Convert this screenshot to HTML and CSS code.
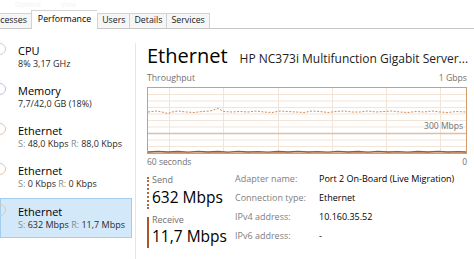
FILE: index.html
```html
<!DOCTYPE html>
<html lang="en">
<head>
    <meta charset="UTF-8">
    <meta name="viewport" content="width=device-width, initial-scale=1.0">
    <title>Task Manager - Performance</title>
    <link rel="stylesheet" href="styles.css">
</head>
<body>

<div class="menu"><span>Options</span><span>View</span></div>

<div class="tabs">
    <div class="tab tab-cut">Processes</div>
    <div class="tab active">Performance</div>
    <div class="tab">Users</div>
    <div class="tab">Details</div>
    <div class="tab last">Services</div>
</div>

<div class="main">
    <div class="sidebar">
        <div class="item">
            <span class="thumb cpu"></span>
            <div>
                <div class="item-title">CPU</div>
                <div class="item-sub">8% 3,17 GHz</div>
            </div>
        </div>
        <div class="item">
            <span class="thumb mem"></span>
            <div>
                <div class="item-title">Memory</div>
                <div class="item-sub">7,7/42,0 GB (18%)</div>
            </div>
        </div>
        <div class="item">
            <span class="thumb net"></span>
            <div>
                <div class="item-title">Ethernet</div>
                <div class="item-sub"><span class="k">S:</span> 48,0 Kbps <span class="k">R:</span> 88,0 Kbps</div>
            </div>
        </div>
        <div class="item">
            <span class="thumb net"></span>
            <div>
                <div class="item-title">Ethernet</div>
                <div class="item-sub"><span class="k">S:</span> 0 Kbps <span class="k">R:</span> 0 Kbps</div>
            </div>
        </div>
        <div class="item selected">
            <span class="thumb net"></span>
            <div>
                <div class="item-title">Ethernet</div>
                <div class="item-sub"><span class="k">S:</span> 632 Mbps <span class="k">R:</span> 11,7 Mbps</div>
            </div>
        </div>
    </div>

    <div class="divider"></div>

    <div class="detail">
        <div class="head">
            <span class="head-title">Ethernet</span>
            <span class="head-sub">HP NC373i Multifunction Gigabit Server...</span>
        </div>

        <div class="axis top-axis"><span>Throughput</span><span>1 Gbps</span></div>

        <div class="graph">
            <svg width="318" height="65" viewBox="0 0 318 65">
                <!-- grid -->
                <g stroke="#f3e4d8" stroke-width="1">
                    <line x1="0" y1="6.5" x2="318" y2="6.5"/>
                    <line x1="0" y1="13" x2="318" y2="13"/>
                    <line x1="0" y1="19.5" x2="318" y2="19.5"/>
                    <line x1="0" y1="26" x2="318" y2="26"/>
                    <line x1="0" y1="32.5" x2="318" y2="32.5"/>
                    <line x1="0" y1="39" x2="318" y2="39"/>
                    <line x1="0" y1="52" x2="318" y2="52"/>
                    <line x1="0" y1="58.5" x2="318" y2="58.5"/>
                    <line x1="21.5" y1="0" x2="21.5" y2="65"/>
                    <line x1="75.5" y1="0" x2="75.5" y2="65"/>
                    <line x1="130.5" y1="0" x2="130.5" y2="65"/>
                    <line x1="184.5" y1="0" x2="184.5" y2="65"/>
                    <line x1="238.5" y1="0" x2="238.5" y2="65"/>
                    <line x1="292.5" y1="0" x2="292.5" y2="65"/>
                </g>
                <!-- 300 Mbps -->
                <line x1="0" y1="45.5" x2="318" y2="45.5" stroke="#dcc0a6" stroke-width="1.5"/>
                <!-- send -->
                <polyline fill="none" stroke="#d48c58" stroke-width="1" stroke-dasharray="2 1.5"
                    points="0,24 8,23 14,24 20,25.5 24,24 30,23 38,24 46,24.5 54,23.5 62,23 70,20.5 76,23.5 84,24 92,23.5 100,24 108,23 116,24 124,24.5 132,23 140,23.5 148,24 156,24.5 164,23 172,23.5 180,24.5 188,23.5 196,23 204,24 212,24 220,23 228,24 236,23.5 244,23 252,24 260,24.5 268,23.5 276,24 284,23 292,24 300,24.5 308,23.5 318,24"/>
                <!-- receive -->
                <polygon fill="#e9cdb6"
                    points="0,64 10,63.3 20,64 30,63.5 40,64.2 50,63.4 60,64 70,63.5 80,64.1 90,63.4 100,64 110,63.6 120,64.2 130,63.5 140,64 150,63.4 160,64 170,63.6 180,64.2 190,63.4 200,64 210,63.5 220,64.1 230,63.4 240,64 250,63.6 260,64.2 270,63.5 280,64 290,63.4 300,64 310,63.6 318,64 318,65 0,65"/>
                <polyline fill="none" stroke="#9e5a2a" stroke-width="1.3"
                    points="0,64 10,63.3 20,64 30,63.5 40,64.2 50,63.4 60,64 70,63.5 80,64.1 90,63.4 100,64 110,63.6 120,64.2 130,63.5 140,64 150,63.4 160,64 170,63.6 180,64.2 190,63.4 200,64 210,63.5 220,64.1 230,63.4 240,64 250,63.6 260,64.2 270,63.5 280,64 290,63.4 300,64 310,63.6 318,64"/>
            </svg>
            <span class="graph-mark">300 Mbps</span>
        </div>

        <div class="axis bottom-axis"><span>60 seconds</span><span>0</span></div>

        <div class="stats">
            <div class="rates">
                <div class="rate send">
                    <div class="rate-label">Send</div>
                    <div class="rate-value">632 Mbps</div>
                </div>
                <div class="rate recv">
                    <div class="rate-label">Receive</div>
                    <div class="rate-value">11,7 Mbps</div>
                </div>
            </div>
            <div class="props">
                <span class="prop-key">Adapter name:</span><span class="prop-val">Port 2 On-Board (Live Migration)</span>
                <span class="prop-key">Connection type:</span><span class="prop-val">Ethernet</span>
                <span class="prop-key">IPv4 address:</span><span class="prop-val">10.160.35.52</span>
                <span class="prop-key">IPv6 address:</span><span class="prop-val">-</span>
            </div>
        </div>
    </div>
</div>

</body>
</html>
```

FILE: styles.css
```css
body {
    margin: 0;
    width: 474px;
    height: 259px;
    overflow: hidden;
    background-color: #ffffff;
    font-family: "Open Sans", "Noto Sans", sans-serif;
    color: #111;
}

/* faded menu line above the tabs */
.menu {
    height: 10px;
    padding-left: 15px;
    font-size: 7px;
    line-height: 10px;
    color: #f3f3f3;
}

.menu span {
    margin-right: 20px;
}

.tabs {
    display: flex;
    align-items: flex-end;
    height: 18px;
    border-bottom: 1px solid #c6c6c6;
}

.tab {
    box-sizing: border-box;
    height: 15px;
    padding: 0 4px;
    font-size: 8.8px;
    line-height: 12px;
    color: #222;
    background-color: #f6f6f6;
    border: 1px solid #d2d2d2;
    border-bottom: none;
    border-right: none;
    white-space: nowrap;
}

.tab.last {
    border-right: 1px solid #d2d2d2;
}

.tab-cut {
    margin-left: -19px;
}

.tab.active {
    height: 19px;
    margin-bottom: -1px;
    padding: 1.5px 6px 0;
    background-color: #ffffff;
    color: #000;
}

.main {
    display: flex;
}

.sidebar {
    width: 132px;
    margin-right: 3px;
    padding-top: 8px;
}

.item {
    box-sizing: border-box;
    display: flex;
    height: 40px;
    padding-top: 6px;
    border: 1px solid transparent;
}

.item.selected {
    margin-top: 1px;
    background-color: #d3e8f9;
    border-color: #a3cdef;
}

.thumb {
    flex: none;
    width: 10px;
    height: 10px;
    margin: -1px 12px 0 -7px;
    border: 1px solid #cfcfcf;
    border-radius: 50%;
}

.thumb.mem {
    border-color: #cbbfd8;
}

.thumb.net {
    border-color: #e2c7ae;
}

.item-title {
    font-size: 11px;
    line-height: 13px;
    color: #000;
}

.item-sub {
    margin-top: 1px;
    font-size: 9px;
    line-height: 11px;
    color: #2a2a2a;
    white-space: nowrap;
}

.item-sub .k {
    color: #8a8a8a;
}

.divider {
    width: 1px;
    margin-top: 14px;
    height: 216px;
    background-color: #e6e6e6;
}

.detail {
    flex: 1;
    padding-left: 11px;
}

.head {
    display: flex;
    align-items: baseline;
    margin-top: 15px;
    white-space: nowrap;
}

.head-title {
    font-size: 20px;
    line-height: 24px;
    color: #000;
}

.head-sub {
    margin-left: 12px;
    font-size: 12px;
    color: #222;
}

.axis {
    display: flex;
    justify-content: space-between;
    width: 320px;
    color: #707070;
}

.top-axis {
    margin-top: 5px;
    font-size: 8.7px;
    line-height: 11px;
}

.bottom-axis {
    margin-top: 2px;
    font-size: 8.5px;
    line-height: 11px;
}

.graph {
    position: relative;
    width: 318px;
    height: 65px;
    margin-top: 3px;
    border: 1px solid #d39c6d;
}

.graph svg {
    display: block;
}

.graph-mark {
    position: absolute;
    right: 3px;
    top: 33px;
    font-size: 8.5px;
    line-height: 10px;
    color: #707070;
}

.stats {
    display: flex;
    margin-top: 5px;
}

.rates {
    width: 88px;
}

.rate {
    padding: 0 0 2px 3px;
    border-left: 2px dotted #b4683a;
}

.rate.send {
    margin-top: 5px;
}

.rate.recv {
    margin-top: 8px;
    border-left-style: solid;
    border-left-color: #a7592a;
}

.rate-label {
    font-size: 9px;
    line-height: 6px;
    color: #707070;
}

.rate-value {
    margin-top: 4.5px;
    font-size: 15.5px;
    line-height: 19px;
    color: #000;
}

.props {
    display: grid;
    grid-template-columns: 84px auto;
    font-size: 9px;
    line-height: 14.5px;
    white-space: nowrap;
}

.prop-key {
    color: #808080;
}

.prop-val {
    color: #000;
}
```
